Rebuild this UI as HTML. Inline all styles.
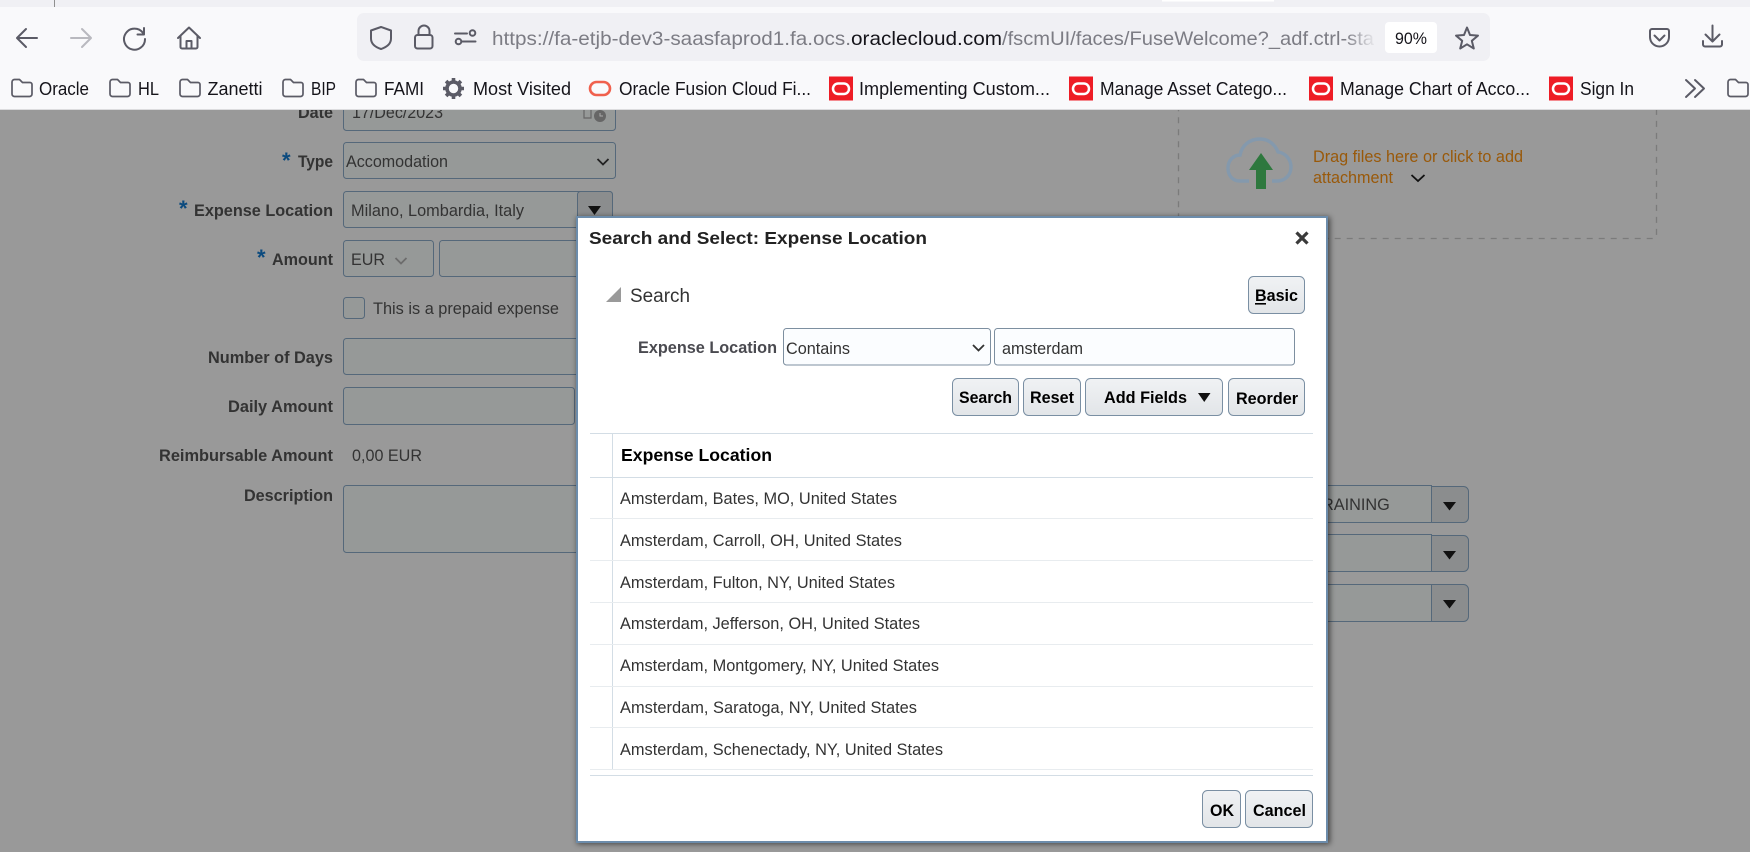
<!DOCTYPE html>
<html lang="en"><head><meta charset="utf-8"><title>Search and Select: Expense Location</title>
<style>
html,body{margin:0;padding:0;width:1750px;height:852px;overflow:hidden;background:#999}
svg{display:block;position:absolute;left:0;top:0}
text{font-family:"Liberation Sans",sans-serif;white-space:pre}
.l{font-weight:bold;font-size:16.3px;fill:#333}
.v{font-size:16.3px;fill:#333}
.d{font-size:16.3px;fill:#333}
.b{font-weight:bold;font-size:16.3px;fill:#000}
.t{font-weight:bold;font-size:17.6px}
.bm{font-size:18.5px;fill:#15141a}
.u{font-size:19.5px;fill:#7c7c84}
.ast{font-weight:bold;font-size:22px;fill:#0b4a7e}
.in{fill:#969998;stroke:#55687a;stroke-width:1}
.btn{fill:url(#bg);stroke:#7a8fa3;stroke-width:1}
.ic{fill:none;stroke:#5b5b66;stroke-width:2;stroke-linecap:round;stroke-linejoin:round}
</style></head><body>
<svg width="1750" height="852" viewBox="0 0 1750 852" xmlns="http://www.w3.org/2000/svg">
<defs>
<linearGradient id="bg" x1="0" y1="0" x2="0" y2="1"><stop offset="0" stop-color="#f0f2f4"/><stop offset="1" stop-color="#e2e5e8"/></linearGradient>
<linearGradient id="fade" x1="0" y1="0" x2="1" y2="0"><stop offset="0" stop-color="#f0f0f4" stop-opacity="0"/><stop offset="1" stop-color="#f0f0f4"/></linearGradient>
<symbol id="f" viewBox="0 0 22 20" overflow="visible"><path d="M1 4a2.5 2.5 0 0 1 2.5-2.5h5l3 3H19a2 2 0 0 1 2 2V16a2.500 2.500 0 0 1-2.500 2.500H3.500A2.500 2.500 0 0 1 1 16Z" fill="none" stroke="#5b5b66" stroke-width="1.700" stroke-linejoin="round"/></symbol>
<symbol id="o" viewBox="0 0 24 24"><rect width="24" height="24" fill="#ee1c25"/><rect x="4" y="7" width="16" height="10.500" rx="5.200" fill="none" stroke="#fff" stroke-width="2.500"/></symbol>
</defs>

<!-- dimmed page -->
<rect width="1750" height="852" fill="#999"/>
<rect x="1178.500" y="90.500" width="478" height="148" rx="3" fill="none" stroke="#7b7b7b" stroke-width="1.300" stroke-dasharray="6 6"/>

<rect class="in" x="343.500" y="95.500" width="272" height="35" rx="3"/>
<text class="l" x="298" y="118" textLength="35" lengthAdjust="spacingAndGlyphs">Date</text>
<text class="v" x="352" y="118" textLength="91" lengthAdjust="spacingAndGlyphs">17/Dec/2023</text>
<path d="M584 108h7v10h-7z" fill="none" stroke="#666" stroke-width="1.200"/><circle cx="600" cy="116" r="6" fill="#666"/><path d="M600 113v3h3" fill="none" stroke="#aaa"/>

<text class="ast" x="282" y="168">*</text>
<text class="l" x="298" y="167" textLength="35" lengthAdjust="spacingAndGlyphs">Type</text>
<rect class="in" x="343.500" y="142.500" width="272" height="36" rx="3"/>
<text class="v" x="346" y="167" textLength="102" lengthAdjust="spacingAndGlyphs">Accomodation</text>
<path d="M597.500 159l5.500 5.500 5.500-5.500" fill="none" stroke="#222" stroke-width="1.800"/>

<text class="ast" x="179" y="216">*</text>
<text class="l" x="194" y="216" textLength="139" lengthAdjust="spacingAndGlyphs">Expense Location</text>
<rect class="in" x="343.500" y="191.500" width="269" height="36" rx="3"/>
<rect x="577.500" y="191.500" width="35" height="36" rx="3" fill="#8b8d8e" stroke="#55687a" stroke-width="1"/>
<text class="v" x="351" y="216" textLength="173" lengthAdjust="spacingAndGlyphs">Milano, Lombardia, Italy</text>
<path d="M588 206h13l-6.500 9z" fill="#111"/>

<text class="ast" x="257" y="265">*</text>
<text class="l" x="272" y="265" textLength="61" lengthAdjust="spacingAndGlyphs">Amount</text>
<rect class="in" x="343.500" y="240.500" width="90" height="36" rx="3"/>
<text class="v" x="351" y="265" textLength="34" lengthAdjust="spacingAndGlyphs">EUR</text>
<path d="M395.500 258l5.500 5.500 5.500-5.500" fill="none" stroke="#6c6c6c" stroke-width="1.800"/>
<rect class="in" x="439.500" y="240.500" width="150" height="36" rx="3"/>

<rect x="343.500" y="297.500" width="21" height="21" rx="3" fill="#969998" stroke="#55687a" stroke-width="1"/>
<text class="v" x="373" y="314" textLength="186" lengthAdjust="spacingAndGlyphs">This is a prepaid expense</text>

<text class="l" x="208" y="363" textLength="125" lengthAdjust="spacingAndGlyphs">Number of Days</text>
<rect class="in" x="343.500" y="338.500" width="250" height="36" rx="3"/>
<text class="l" x="228" y="412" textLength="105" lengthAdjust="spacingAndGlyphs">Daily Amount</text>
<rect class="in" x="343.500" y="387.500" width="231" height="37" rx="3"/>
<text class="l" x="159" y="461" textLength="174" lengthAdjust="spacingAndGlyphs">Reimbursable Amount</text>
<text class="v" x="352" y="461" textLength="70" lengthAdjust="spacingAndGlyphs">0,00 EUR</text>
<text class="l" x="244" y="501" textLength="89" lengthAdjust="spacingAndGlyphs">Description</text>
<rect class="in" x="343.500" y="485.500" width="250" height="67" rx="3"/>

<!-- right column -->
<path d="M1249 181H1240C1232 181 1228 175 1228 168C1228 160 1234 155 1240 155C1242 145 1250 139 1260 139C1268 139 1275 144 1278 152C1286 153 1291 160 1291 167C1291 175 1285 181 1277 181H1272" fill="none" stroke="#8499ad" stroke-width="3.400"/>
<path d="M1261 153l12 17h-7v19h-10v-19h-7z" fill="#2e783e"/>
<text class="v" x="1313" y="162" textLength="210" lengthAdjust="spacingAndGlyphs" style="fill:#99590a">Drag files here or click to add</text>
<text class="v" x="1313" y="183" textLength="80" lengthAdjust="spacingAndGlyphs" style="fill:#99590a">attachment</text>
<path d="M1411.500 175l6.500 6 6.500-6" fill="none" stroke="#111" stroke-width="1.800"/>

<rect class="in" x="1300.500" y="485.500" width="131" height="37"/>
<rect class="in" x="1300.500" y="534.500" width="131" height="37"/>
<rect class="in" x="1300.500" y="584.500" width="131" height="37"/>
<text class="v" x="1312" y="510">TRAINING</text>
<g fill="#8b8d8e" stroke="#55687a" stroke-width="1">
<path d="M1431.500 486.500h32a5 5 0 0 1 5 5v26a5 5 0 0 1-5 5h-32z"/>
<path d="M1431.500 535.500h32a5 5 0 0 1 5 5v26a5 5 0 0 1-5 5h-32z"/>
<path d="M1431.500 584.500h32a5 5 0 0 1 5 5v27a5 5 0 0 1-5 5h-32z"/>
</g>
<path d="M1443 502h13l-6.500 8.500zM1443 551h13l-6.500 8.500zM1443 600h13l-6.500 8.500z" fill="#111"/>

<!-- dialog -->
<rect x="576" y="216" width="753" height="627" fill="#000" style="filter:blur(3px)" opacity=".55" transform="translate(1 1)"/>
<rect x="577" y="217" width="750" height="625" fill="#fff" stroke="#6c8cab" stroke-width="2"/>
<text class="t" x="589" y="244" textLength="338" lengthAdjust="spacingAndGlyphs" style="fill:#222">Search and Select: Expense Location</text>
<path d="M1296.500 232.500l11 11M1307.500 232.500l-11 11" stroke="#3a3a3a" stroke-width="3.200" fill="none"/>

<path d="M621 287v15h-15z" fill="#9a9a9a"/>
<text class="v" style="font-size:19px" x="630" y="302" textLength="60" lengthAdjust="spacingAndGlyphs">Search</text>
<rect class="btn" x="1248.500" y="276.500" width="56" height="37" rx="5"/>
<text class="b" x="1255" y="301" textLength="43" lengthAdjust="spacingAndGlyphs">Basic</text>
<rect x="1255" y="303" width="11" height="1.600" fill="#000"/>

<text class="l" x="638" y="353" textLength="139" lengthAdjust="spacingAndGlyphs" style="fill:#4a4a50">Expense Location</text>
<rect x="783.500" y="328.500" width="207" height="36.500" rx="3" fill="#fbfdff" stroke="#7d8fa0" stroke-width="1"/>
<text class="v" x="786" y="354" textLength="64" lengthAdjust="spacingAndGlyphs">Contains</text>
<path d="M973 345l5.500 5.500 5.500-5.500" fill="none" stroke="#333" stroke-width="1.800"/>
<rect x="994.500" y="328.500" width="300" height="36.500" rx="3" fill="#fbfdff" stroke="#7d8fa0" stroke-width="1"/>
<text class="v" x="1002" y="354" textLength="81" lengthAdjust="spacingAndGlyphs">amsterdam</text>

<rect class="btn" x="952.500" y="378.500" width="66" height="37" rx="5"/>
<text class="b" x="959" y="403" textLength="53" lengthAdjust="spacingAndGlyphs">Search</text>
<rect class="btn" x="1023.500" y="378.500" width="57" height="37" rx="5"/>
<text class="b" x="1030" y="403" textLength="44" lengthAdjust="spacingAndGlyphs">Reset</text>
<rect class="btn" x="1085.500" y="378.500" width="137" height="37" rx="5"/>
<text class="b" x="1104" y="403" textLength="83" lengthAdjust="spacingAndGlyphs">Add Fields</text>
<path d="M1198 393h12.500l-6.250 9z" fill="#111"/>
<rect class="btn" x="1228.500" y="378.500" width="76" height="37" rx="5"/>
<text class="b" x="1236" y="404" textLength="62" lengthAdjust="spacingAndGlyphs">Reorder</text>

<!-- table -->
<rect x="590" y="433" width="723" height="1" fill="#d3dde5"/>
<rect x="612" y="433" width="1" height="337" fill="#d3dde5"/>
<text class="t" x="621" y="461" textLength="151" lengthAdjust="spacingAndGlyphs" style="fill:#000">Expense Location</text>
<rect x="590" y="477" width="723" height="1" fill="#d3dde5"/>
<g fill="#e8ecef">
<rect x="590" y="518" width="723" height="1"/><rect x="590" y="560" width="723" height="1"/><rect x="590" y="602" width="723" height="1"/><rect x="590" y="644" width="723" height="1"/><rect x="590" y="686" width="723" height="1"/><rect x="590" y="727" width="723" height="1"/><rect x="590" y="769" width="723" height="1"/>
</g>
<text class="d" x="620" y="504" textLength="277" lengthAdjust="spacingAndGlyphs">Amsterdam, Bates, MO, United States</text>
<text class="d" x="620" y="546" textLength="282" lengthAdjust="spacingAndGlyphs">Amsterdam, Carroll, OH, United States</text>
<text class="d" x="620" y="588" textLength="275" lengthAdjust="spacingAndGlyphs">Amsterdam, Fulton, NY, United States</text>
<text class="d" x="620" y="629" textLength="300" lengthAdjust="spacingAndGlyphs">Amsterdam, Jefferson, OH, United States</text>
<text class="d" x="620" y="671" textLength="319" lengthAdjust="spacingAndGlyphs">Amsterdam, Montgomery, NY, United States</text>
<text class="d" x="620" y="713" textLength="297" lengthAdjust="spacingAndGlyphs">Amsterdam, Saratoga, NY, United States</text>
<text class="d" x="620" y="755" textLength="323" lengthAdjust="spacingAndGlyphs">Amsterdam, Schenectady, NY, United States</text>
<rect x="590" y="775" width="723" height="1" fill="#d3dde5"/>

<rect class="btn" x="1202.500" y="790.500" width="38" height="37" rx="5"/>
<text class="b" x="1210" y="816" textLength="24" lengthAdjust="spacingAndGlyphs">OK</text>
<rect class="btn" x="1245.500" y="790.500" width="67" height="37" rx="5"/>
<text class="b" x="1253" y="816" textLength="53" lengthAdjust="spacingAndGlyphs">Cancel</text>

<!-- browser chrome -->
<rect width="1750" height="110" fill="#f9f9fb"/>
<rect width="1750" height="7" fill="#f0f0f4"/>
<rect x="54" y="0" width="1" height="7" fill="#8f8f8f"/>
<rect x="1162" y="0" width="112" height="1.500" fill="#fff"/>
<rect y="109" width="1750" height="1" fill="#dcdcde"/>

<path class="ic" d="M37 38H18M26 29l-9 9 9 9"/>
<path class="ic" d="M71 38h19M82 29l9 9-9 9" style="stroke:#b9b9bf"/>
<path class="ic" d="M143 33A10.500 10.500 0 1 0 145 39M144 28v6.500h-6.500"/>
<path class="ic" d="M178 38l11-10.500L200 38M180.500 36v11a1.500 1.500 0 0 0 1.500 1.500h14a1.500 1.500 0 0 0 1.500-1.500V36M186.500 48.500V41h5v7.500"/>

<rect x="357" y="13" width="1133" height="48" rx="7" fill="#f0f0f4"/>
<path class="ic" d="M381 27l10 3.500v8c0 5-4 8.500-10 10.500-6-2-10-5.500-10-10.500v-8z"/>
<rect class="ic" x="415" y="35" width="17.500" height="13.500" rx="2.500"/>
<path class="ic" d="M418.500 35v-4a5.500 5.500 0 0 1 11 0v4"/>
<path class="ic" d="M455 33.500h12M462 41.500h13.500"/><circle class="ic" cx="472.500" cy="33" r="2.800"/><circle class="ic" cx="458.500" cy="41.500" r="2.800"/>
<text class="u" x="492" y="45" textLength="359" lengthAdjust="spacingAndGlyphs">https://fa-etjb-dev3-saasfaprod1.fa.ocs.</text>
<text class="u" x="851" y="45" textLength="151" lengthAdjust="spacingAndGlyphs" style="fill:#15141a">oraclecloud.com</text>
<text class="u" x="1002" y="45" textLength="372" lengthAdjust="spacingAndGlyphs">/fscmUI/faces/FuseWelcome?_adf.ctrl-sta</text>
<rect x="1345" y="20" width="32" height="34" fill="url(#fade)"/>
<rect x="1385" y="22" width="52" height="31" rx="4" fill="#fff"/>
<text x="1395" y="44" textLength="32" lengthAdjust="spacingAndGlyphs" style="font-size:17px;fill:#15141a">90%</text>
<path class="ic" d="M1467 27.500l3 7.500 8 .6-6.200 5.200 2 7.700-6.800-4.200-6.800 4.200 2-7.700-6.200-5.200 8-.6z"/>
<path class="ic" d="M1652 29h15a2 2 0 0 1 2 2v6c0 5.500-4.500 9.500-9.500 9.500S1650 42.500 1650 37v-6a2 2 0 0 1 2-2z"/>
<path class="ic" d="M1654.500 35.500l5 5 5-5"/>
<path class="ic" d="M1712.500 25.500v16M1705.500 34.500l7 7 7-7M1703 41v3.500a2 2 0 0 0 2 2h15a2 2 0 0 0 2-2V41"/>

<!-- bookmarks -->
<use href="#f" x="11" y="78" width="22" height="20"/><text class="bm" x="39" y="95" textLength="50" lengthAdjust="spacingAndGlyphs">Oracle</text>
<use href="#f" x="109" y="78" width="22" height="20"/><text class="bm" x="138" y="95" textLength="21" lengthAdjust="spacingAndGlyphs">HL</text>
<use href="#f" x="179" y="78" width="22" height="20"/><text class="bm" x="207.500" y="95" textLength="55" lengthAdjust="spacingAndGlyphs">Zanetti</text>
<use href="#f" x="282" y="78" width="22" height="20"/><text class="bm" x="311" y="95" textLength="25" lengthAdjust="spacingAndGlyphs">BIP</text>
<use href="#f" x="355" y="78" width="22" height="20"/><text class="bm" x="384" y="95" textLength="40" lengthAdjust="spacingAndGlyphs">FAMI</text>
<g transform="translate(453.500 88.500)"><circle r="6.500" fill="none" stroke="#5b5b66" stroke-width="3.600"/><path d="M-1.800-10.500h3.600v3h-3.600zM-1.800 7.500h3.600v3h-3.600zM-10.500-1.800h3v3.600h-3zM7.500-1.800h3v3.600h-3z" fill="#5b5b66"/><path d="M-1.800-10.500h3.600v3h-3.600zM-1.800 7.500h3.600v3h-3.600zM-10.500-1.800h3v3.600h-3zM7.500-1.800h3v3.600h-3z" fill="#5b5b66" transform="rotate(45)"/></g>
<text class="bm" x="473" y="95" textLength="98" lengthAdjust="spacingAndGlyphs">Most Visited</text>
<rect x="590" y="82" width="20" height="13" rx="6.500" fill="none" stroke="#f0604d" stroke-width="2.600"/>
<text class="bm" x="619" y="95" textLength="192" lengthAdjust="spacingAndGlyphs">Oracle Fusion Cloud Fi...</text>
<use href="#o" x="829" y="76" width="24" height="25"/><text class="bm" x="859" y="95" textLength="191" lengthAdjust="spacingAndGlyphs">Implementing Custom...</text>
<use href="#o" x="1069" y="76" width="24" height="25"/><text class="bm" x="1100" y="95" textLength="187" lengthAdjust="spacingAndGlyphs">Manage Asset Catego...</text>
<use href="#o" x="1309" y="76" width="24" height="25"/><text class="bm" x="1340" y="95" textLength="190" lengthAdjust="spacingAndGlyphs">Manage Chart of Acco...</text>
<use href="#o" x="1549" y="76" width="24" height="25"/><text class="bm" x="1580" y="95" textLength="54" lengthAdjust="spacingAndGlyphs">Sign In</text>
<path class="ic" d="M1686 80l9 8.500-9 8.500M1695 80l9 8.500-9 8.500"/>
<use href="#f" x="1727" y="78" width="22" height="20"/>
</svg>
</body></html>
